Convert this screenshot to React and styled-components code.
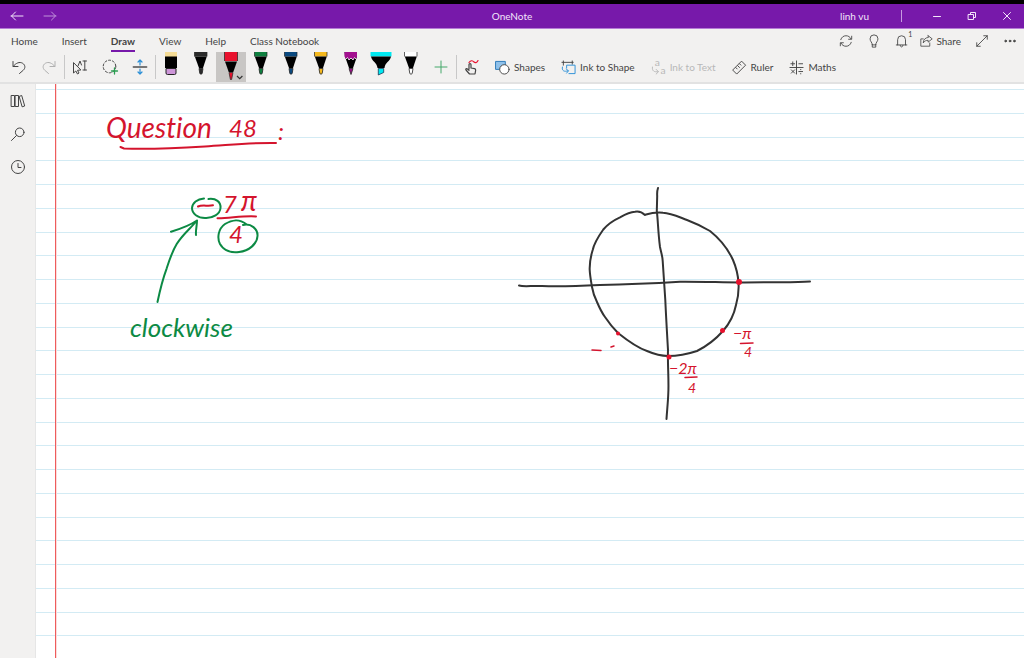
import styled, { createGlobalStyle } from "styled-components";

const tabs = ["Home", "Insert", "Draw", "View", "Help", "Class Notebook"];

const pens = [
  { name: "Black pen", color: "#2b2b2b" },
  { name: "Red pen", color: "#e8112d", active: true },
  { name: "Green pen", color: "#0f8040" },
  { name: "Blue pen", color: "#0b4a80" },
  { name: "Yellow pen", color: "#f5b81c" },
  { name: "Galaxy pencil", color: "#a3108f", kind: "pencil" },
  { name: "Highlighter", color: "#00e8f0", kind: "highlighter" },
  { name: "White pen", color: "#ffffff" },
];

const Icon = ({ children, size = 16 }) => (
  <svg
    width={size}
    height={size}
    viewBox="0 0 16 16"
    fill="none"
    stroke="currentColor"
    strokeWidth="1"
    strokeLinecap="round"
    strokeLinejoin="round"
    aria-hidden="true"
  >
    {children}
  </svg>
);

const PenIcon = ({ color, kind, active }) => {
  if (kind === "eraser") {
    return (
      <svg width="30" height="30" viewBox="0 0 30 30">
        <path d="M9 0h12v5H9z" fill="#f5dc96" />
        <path d="M9 4.500h12v11.500H9z" fill="#000" />
        <path d="M10 16.500h10v4.500q0 1.500-1.500 1.500h-7q-1.500 0-1.500-1.500z" fill="#cd96d8" stroke="#222" />
      </svg>
    );
  }
  if (kind === "highlighter") {
    return (
      <svg width="30" height="30" viewBox="0 0 30 30">
        <path d="M4.500 0h21v4.500H4.500z" fill={color} />
        <path d="M5 4.500h20c-1 5-6 6-6.500 11.500h-7C11 10.500 6 9.500 5 4.500z" fill="#000" />
        <path d="M12.300 16.500h5.400v4l-5.400 2.500z" fill={color} stroke="#124" strokeWidth=".7" />
      </svg>
    );
  }
  if (kind === "pencil") {
    return (
      <svg width="30" height="30" viewBox="0 0 30 30">
        <path d="M8.500 0H21v4.500L17 16h-4L9 4.500z" fill="#000" />
        <path d="M8.500 0H21v4.500l-1 2.500-1.500-1.500L17 8l-2-2-2 2-1.500-2.500L10 7 8.500 4.500z" fill={color} />
        <path d="M10 7l1.500-1.500L13 8l2-2 2 2 1.500-2.500L20 7" fill="none" stroke="#fff" strokeWidth=".8" />
        <path d="M13 16.500h4L15 22.500z" fill={color} stroke="#222" strokeWidth=".8" />
      </svg>
    );
  }
  if (active) {
    return (
      <svg width="30" height="30" viewBox="0 0 30 30">
        <path d="M8.500 0h13v9h-13z" fill={color} />
        <path d="M8.500 0v9M21.500 0v9" stroke="#222" strokeWidth=".7" />
        <path d="M9 9.500h12l-3.700 10.500h-4.600z" fill="#000" />
        <path d="M13 20.500h4l-1.400 7h-1.200z" fill={color} stroke="#222" strokeWidth=".7" />
        <path d="M21 24l2.700 2.700 2.700-2.700" fill="none" stroke="#333" strokeWidth="1.200" />
      </svg>
    );
  }
  return (
    <svg width="30" height="30" viewBox="0 0 30 30">
      <path d="M8.500 0h12.500v4.500H8.500z" fill={color} />
      <path d="M8.500 0v4.500M21 0v4.500" stroke="#222" strokeWidth=".7" />
      <path d="M8.800 4.500h12L17 16h-4z" fill="#000" />
      <path d="M13 16.500h4l-.8 5q-1.200 1.500-2.400 0z" fill={color} stroke="#222" strokeWidth=".8" />
    </svg>
  );
};

const Ink = () => (
  <InkSvg width="860" height="400" viewBox="36 84 860 400">
    <g stroke="#333" strokeWidth="2">
      <path d="M645 215C642 212 639 211 635 211.700C629 212 624 215 620 217.300C613 220.500 607 225 603.300 229.500C598 237 594 244 592.700 250C590.500 257 589.500 264 589.700 270C590 276 591 281 592 287C593 293 595 298 597 302C600 309 602 313 605 317C609 323 613 328 618 333C628 341 638 348 647 351C654 354 661 356 668 356C679 356 688 354 697 351C707 346 715 340 723 331C730 323 734 315 736 305C738 298 739 290 738.500 282.700C738 275 736 267 733 260C728 249 720 239 710 231C703 227 695 223 687 220C679 217 671 213 663 212.700C657 212 651 213 645 214.700" />
      <path d="M658 188C657 191 657 193 657.200 196L656.800 211C658 220 658 232 660 247C661 252 662.500 256 662.700 261L665.300 300C666 316 667 333 668 350C667.500 364 669 380 668.300 393C668 402 667 411 666.500 419" />
      <path d="M519 285.500C524 287 532 285.500 542 286C560 287 580 286 600 285C625 284.500 650 283.500 680 281.700C705 281.500 720 282.500 740 282.500C765 281.500 790 283 810 281.500" />
    </g>
    <g stroke="#d4142d" strokeWidth="2">
      <path d="M120.500 147L124 148.500C150 149.500 180 148 205 146.500C230 145 252 142.500 276 143" />
      <path d="M198 206.500C202 204.500 208 206.500 213 205.300" />
      <path d="M217.500 218.300C229 218.500 243 215.500 256 216.500" />
      <path d="M685 377.500L697 377M740.500 343.500L753 343" strokeWidth="1.500" />
      <path d="M592 350L601 350.500M611 347L614 346" strokeWidth="1.500" />
    </g>
    <g fill="#e8112d" stroke="none">
      <circle cx="739" cy="282" r="3" />
      <circle cx="722.500" cy="330.500" r="2.500" />
      <circle cx="669" cy="357" r="2.500" />
      <circle cx="618" cy="333.500" r="2" />
    </g>
    <g stroke="#0c8a44" strokeWidth="2">
      <path d="M204 198.500C197 199 192.500 203 192 208C192 214 198 218 205 218C213 218.500 220 214 220.500 208C221 202 216 198 208.500 199" />
      <path d="M246 224C240 219 232 219.500 225 224C218 229 217 238 220 244C224 251 232 253 239 252C249 251 257 244 257.500 236C258 229 251 223 243 225" />
      <path d="M157.500 302C160 290 162 281 166.700 268.300C170 258 173 250 176.700 244C183 234 191 228 197 220.500C197 226 195.500 230 196 235M171 231.700C180 229 189 226 197 220.500" />
    </g>
    <InkText x="106" y="138" $size={28} fill="#d4142d">Question</InkText>
    <InkText x="229" y="137" $size={24} fill="#d4142d">48</InkText>
    <InkText x="278" y="140" $size={24} fill="#d4142d">:</InkText>
    <InkText x="223" y="213" $size={24} fill="#d4142d">7</InkText>
    <InkText x="241" y="211" $size={28} fill="#d4142d">π</InkText>
    <InkText x="229" y="243" $size={24} fill="#d4142d">4</InkText>
    <InkText x="130" y="337" $size={26} fill="#0c8a44">clockwise</InkText>
    <InkText x="733" y="339" $size={16} fill="#d4142d">−π</InkText>
    <InkText x="744" y="357" $size={14} fill="#d4142d">4</InkText>
    <InkText x="669" y="374" $size={16} fill="#d4142d">−2π</InkText>
    <InkText x="688" y="393" $size={14} fill="#d4142d">4</InkText>
  </InkSvg>
);

export default function App() {
  return (
    <Page>
      <GlobalStyle />
      <TitleBar>
        <TitleGroup>
          <TitleButton aria-label="Back">
            <Icon><path d="M2 8h12M6.500 4L2.500 8l4 4" /></Icon>
          </TitleButton>
          <TitleButton aria-label="Forward" $dim>
            <Icon><path d="M2 8h12M9.500 4l4 4-4 4" /></Icon>
          </TitleButton>
        </TitleGroup>
        <AppName>OneNote</AppName>
        <TitleGroup $end>
          <UserName>linh vu</UserName>
          <TitleDivider />
          <WindowButton aria-label="Minimise">
            <Icon><path d="M4.500 8.500h7" /></Icon>
          </WindowButton>
          <WindowButton aria-label="Restore">
            <Icon><path d="M4.500 6.500h5v5h-5zM6.500 6.500v-2h5v5h-2" /></Icon>
          </WindowButton>
          <WindowButton aria-label="Close">
            <Icon><path d="M4.500 4.500l7 7M11.500 4.500l-7 7" /></Icon>
          </WindowButton>
        </TitleGroup>
      </TitleBar>

      <TabBar>
        <Tabs>
          {tabs.map((tab) => (
            <Tab key={tab} $active={tab === "Draw"}>{tab}</Tab>
          ))}
        </Tabs>
        <Actions>
          <ActionButton aria-label="Sync">
            <Icon size={14}>
              <path d="M2 6.500C3 3.500 5.200 2 8 2c2.600 0 4.500 1.300 5.700 3.500M14.500 2.500v3.500H11M14 9.500C13 12.500 10.800 14 8 14c-2.600 0-4.500-1.300-5.700-3.500M1.500 13.500V10H5" />
            </Icon>
          </ActionButton>
          <ActionButton aria-label="Tell me">
            <Icon size={14}>
              <path d="M6 12C6 9.500 3.500 8.500 3.500 5.500a4.500 4.500 0 019 0C12.500 8.500 10 9.500 10 12zM6 12v3h4v-3" />
            </Icon>
          </ActionButton>
          <ActionButton aria-label="Notifications">
            <Icon size={14}>
              <path d="M1.500 12.500h12M3 12.500V6.500a4.500 4.500 0 019 0v6M6 13c0 2.500 3 2.500 3 0" />
            </Icon>
            <Badge>1</Badge>
          </ActionButton>
          <ShareButton>
            <Icon size={13}>
              <path d="M4 6H1v9h11v-4M10 2l5 4-5 4V7.800C7.500 7.800 5.500 8.500 4 11c0-4 2.500-6.500 6-6.800z" />
            </Icon>
            Share
          </ShareButton>
          <ActionButton aria-label="Full screen">
            <Icon size={14}>
              <path d="M2 14L14 2M10 2h4v4M2 10v4h4" />
            </Icon>
          </ActionButton>
          <ActionButton aria-label="More">
            <Icon size={14}>
              <g fill="currentColor">
                <circle cx="3" cy="8" r="1" />
                <circle cx="8" cy="8" r="1" />
                <circle cx="13" cy="8" r="1" />
              </g>
            </Icon>
          </ActionButton>
        </Actions>
      </TabBar>

      <Toolbar>
        <ToolButton aria-label="Undo">
          <Icon><path d="M2 2.500v5h5M2.300 7.200C5 4 8.500 2.500 11.500 4.200c3 1.800 3 5 .8 7L8.500 14.500" /></Icon>
        </ToolButton>
        <ToolButton aria-label="Redo" disabled>
          <Icon><path d="M14 2.500v5H9M13.700 7.200C11 4 7.500 2.500 4.500 4.200c-3 1.800-3 5-.8 7l3.800 3.300" /></Icon>
        </ToolButton>
        <Divider />
        <ToolButton aria-label="Select objects or type text">
          <Icon>
            <path d="M1.500 4v10l2.300-2 1.700 3 1.500-1-1.500-2.700 3-.3z" />
            <path d="M6 7l2-5 1.500 4M11 2h3.500M11 11h3.500M12.800 2v9" />
          </Icon>
        </ToolButton>
        <ToolButton aria-label="Lasso select">
          <Icon>
            <circle cx="7.500" cy="7.500" r="6.300" strokeDasharray="2 2" />
            <path d="M12.500 9v6M9.500 12h6" stroke="#2a9d50" strokeWidth="1.300" />
          </Icon>
        </ToolButton>
        <ToolButton aria-label="Insert or remove space">
          <Icon>
            <path d="M1.500 8h13" stroke="#777" strokeWidth="1.800" />
            <path d="M8 6V1M6 3l2-2 2 2M8 10v5M6 13l2 2 2-2" stroke="#2b8fd6" strokeWidth="1.200" />
          </Icon>
        </ToolButton>
        <Divider />
        <PenButton aria-label="Eraser">
          <PenIcon kind="eraser" />
        </PenButton>
        {pens.map((pen) => (
          <PenButton key={pen.name} aria-label={pen.name} $active={pen.active}>
            <PenIcon {...pen} />
          </PenButton>
        ))}
        <ToolButton aria-label="Add pen">
          <Icon><path d="M8 2v12M2 8h12" stroke="#45a86b" /></Icon>
        </ToolButton>
        <Divider />
        <ToolButton aria-label="Draw with touch">
          <Icon>
            <path d="M5 10V5.500c0-1.300 2-1.300 2 0V9l3.500.7c1 .2 1.300 1 1.100 2L11 15H5.500L2 11c-.8-1 .5-2 1.500-1L5 11.300" strokeWidth="1.200" />
            <path d="M5 3.500c2-3 4-1.500 5-.5s3 1 4-1.500" stroke="#e8112d" strokeWidth="1.200" />
          </Icon>
        </ToolButton>
        <LabelButton>
          <Icon size={15}>
            <path d="M1 1.500h10v4L5.500 10H1z" fill="#8fc1ea" stroke="#2878b8" />
            <circle cx="10" cy="10" r="5" fill="#fff" />
          </Icon>
          Shapes
        </LabelButton>
        <LabelButton>
          <Icon size={15}>
            <path d="M2.500 5.500V1M1 2.500h12M12 1v3.500" />
            <path d="M6 8.500V5.500h9v9H8.500M1.500 7.500c-1 4 2 5.500 6 4M5.500 9.500l2.500 2-2 2.500" stroke="#2b8fd6" />
          </Icon>
          Ink to Shape
        </LabelButton>
        <LabelButton disabled>
          <Icon size={15}>
            <GlyphText x="4" y="6">a</GlyphText>
            <GlyphText x="10" y="15">a</GlyphText>
            <path d="M1.500 7.500c-.5 4.500 2 5.500 6 5M5.500 10l2.500 2.500L5.500 15" />
          </Icon>
          Ink to Text
        </LabelButton>
        <LabelButton>
          <Icon size={15}>
            <path d="M10.500 1.500l4 4-9.500 9.500-4-4zM4 8l1.500 1.500M6 6l2 2M8 4l1.500 1.500" />
          </Icon>
          Ruler
        </LabelButton>
        <LabelButton>
          <Icon size={15}>
            <path d="M8 1v14M1 8h14M2 4h4M4 2v4M10.500 4h4M2.500 10.500l3.500 3.500M6 10.500l-3.500 3.500M10.500 12.300h4M12.500 10v.3M12.500 14.500v.3" />
          </Icon>
          Maths
        </LabelButton>
      </Toolbar>

      <Body>
        <Sidebar>
          <SideButton aria-label="Show notebooks">
            <Icon>
              <path d="M1.500 2.500h3v11h-3zM5.500 2.500h3v11h-3zM9.500 3.300l2.200-.8 3 10.500-2.200.7z" />
            </Icon>
          </SideButton>
          <SideButton aria-label="Search">
            <Icon>
              <circle cx="9.700" cy="6.300" r="4.300" />
              <path d="M6.500 9.500L1.500 14.500" />
            </Icon>
          </SideButton>
          <SideButton aria-label="Recent notes">
            <Icon>
              <circle cx="8" cy="8" r="6.500" />
              <path d="M8 4.500V8.500h3" />
            </Icon>
          </SideButton>
        </Sidebar>
        <Paper>
          <Ink />
        </Paper>
      </Body>
    </Page>
  );
}

const GlobalStyle = createGlobalStyle`
  * {
    box-sizing: border-box;
  }
  body {
    margin: 0;
    font-family: Lato, "Open Sans", sans-serif;
    font-size: 10px;
    color: #444;
  }
  button {
    border: none;
    background: none;
    padding: 0;
    font: inherit;
    color: inherit;
    display: flex;
    align-items: center;
    justify-content: center;
  }
  svg {
    flex: none;
    display: block;
    overflow: visible;
  }
`;

const Page = styled.div`
  display: flex;
  flex-direction: column;
  min-height: 100vh;
  background-color: #f2f1f0;
`;

const TitleBar = styled.header`
  display: grid;
  grid-template-columns: 1fr auto 1fr;
  align-items: center;
  height: 29px;
  border-top: 4px solid #000;
  border-bottom: 1px solid #b57bd6;
  background-color: #7719aa;
  color: #f3e6fa;
`;

const TitleGroup = styled.div`
  display: flex;
  align-items: center;
  justify-content: ${({ $end }) => ($end ? "flex-end" : "flex-start")};
`;

const TitleButton = styled.button`
  width: 33px;
  height: 24px;
  opacity: ${({ $dim }) => ($dim ? 0.6 : 1)};
`;

const AppName = styled.h1`
  margin: 0;
  font-size: 10px;
  font-weight: 400;
`;

const UserName = styled.span`
  margin-right: 32px;
`;

const TitleDivider = styled.span`
  width: 1px;
  height: 12px;
  margin-right: 17px;
  background-color: #c79be0;
`;

const WindowButton = styled.button`
  width: 35px;
  height: 24px;
`;

const TabBar = styled.div`
  display: flex;
  justify-content: space-between;
  height: 23px;
`;

const Tabs = styled.nav`
  display: flex;
  gap: 24px;
  padding-left: 11px;
`;

const Tab = styled.button`
  height: 23px;
  font-weight: ${({ $active }) => ($active ? 700 : 400)};
  border-top: 2px solid transparent;
  border-bottom: 2px solid ${({ $active }) => ($active ? "#7719aa" : "transparent")};
`;

const Actions = styled.div`
  display: flex;
  align-items: center;
`;

const ActionButton = styled.button`
  position: relative;
  width: 28px;
  height: 23px;
`;

const Badge = styled.span`
  position: absolute;
  top: 1px;
  right: 4px;
  font-size: 7px;
`;

const ShareButton = styled.button`
  gap: 3px;
  padding: 0 7px 0 4px;
`;

const Toolbar = styled.div`
  display: flex;
  align-items: center;
  height: 32px;
  padding-left: 4px;
  border-bottom: 2px solid #e2e2e2;
`;

const ToolButton = styled.button`
  width: 30px;
  height: 30px;

  &:disabled {
    color: #b0b0b0;
  }
`;

const PenButton = styled.button`
  width: 30px;
  height: 30px;
  background-color: ${({ $active }) => ($active ? "#c8c6c4" : "transparent")};
`;

const LabelButton = styled.button`
  gap: 4px;
  height: 30px;
  padding: 0 8px;
  white-space: nowrap;

  &:disabled {
    color: #b8b8b8;
  }
`;

const Divider = styled.span`
  width: 1px;
  height: 24px;
  background-color: #c8c8c8;
`;

const Body = styled.div`
  display: flex;
  flex: 1;
`;

const Sidebar = styled.aside`
  display: flex;
  flex-direction: column;
  width: 36px;
  border-right: 1px solid #e6e6e6;
`;

const SideButton = styled.button`
  height: 33px;
`;

/* four ruled lines every 95px */
const Paper = styled.main`
  flex: 1;
  overflow: hidden;
  background-color: #fff;
  background-image: linear-gradient(
      to right,
      transparent 19px,
      #ee5c5c 19px 20px,
      #fbdcdc 20px 21px,
      transparent 21px
    ),
    linear-gradient(
      #d3ebf4 1px,
      transparent 1px 24px,
      #d3ebf4 24px 25px,
      transparent 25px 48px,
      #d3ebf4 48px 49px,
      transparent 49px 71px,
      #d3ebf4 71px 72px,
      transparent 72px
    );
  background-size: 100% 100%, 100% 95px;
  background-position: 0 0, 0 5px;
`;

const InkSvg = styled.svg`
  fill: none;
  stroke-linecap: round;
  stroke-linejoin: round;
`;

const InkText = styled.text`
  font-family: Lato, "Open Sans", sans-serif;
  font-size: ${({ $size }) => $size}px;
  font-style: italic;
  font-variant-ligatures: none;
`;

const GlyphText = styled.text`
  font-size: 11px;
  fill: currentColor;
  stroke: none;
`;
